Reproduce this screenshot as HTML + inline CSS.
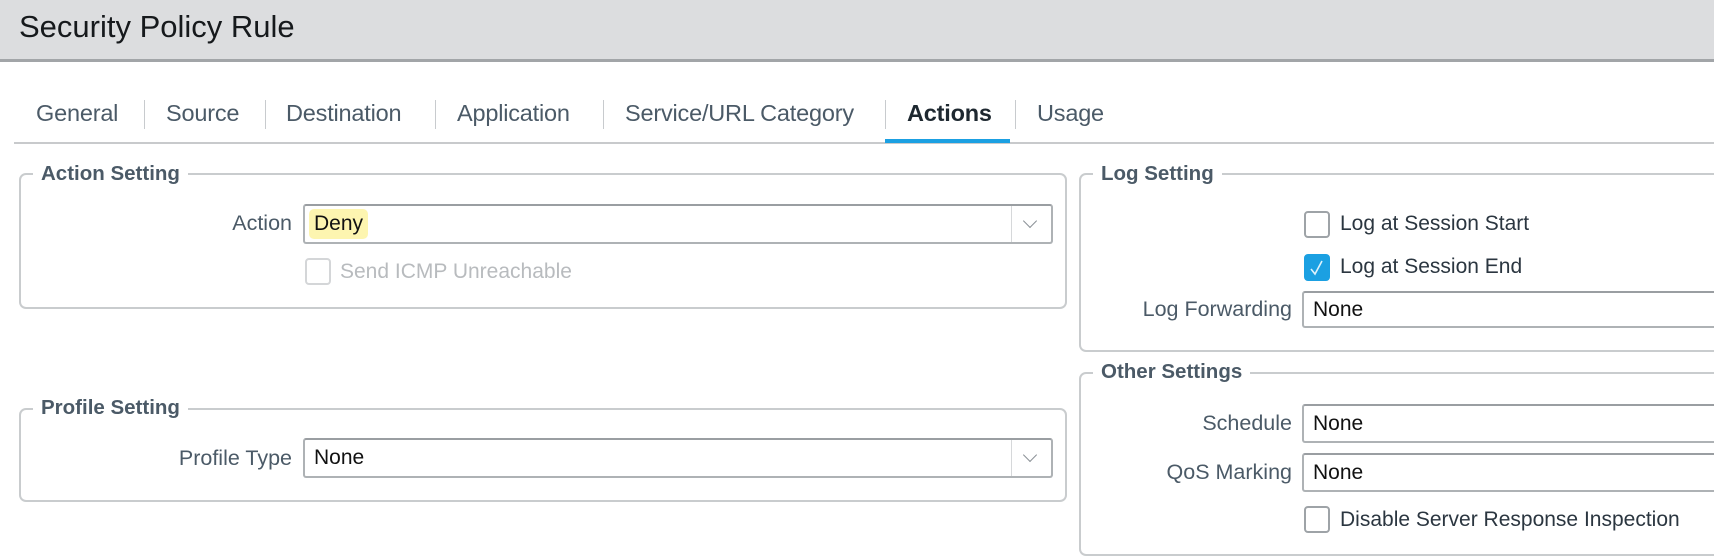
<!DOCTYPE html>
<html><head><meta charset="utf-8"><style>
*{box-sizing:border-box;margin:0;padding:0}
body{width:1714px;height:558px;overflow:hidden;background:#fff;font-family:"Liberation Sans",sans-serif;position:relative;color:#4b5a67}
.a{position:absolute;white-space:nowrap}
.hdr{left:0;top:0;width:1714px;height:62px;background:#dcdddf;border-bottom:3px solid #a2a5a8}
.title{left:19px;top:9px;font-size:31px;color:#16191c}
.tab{top:100px;font-size:23.5px;color:#4b5a67;letter-spacing:-0.2px}
.sep{top:100px;width:1px;height:29px;background:#c8cbce}
.box{border:2px solid #c9ccce;border-radius:7px}
.leg{font-size:20.5px;font-weight:bold;color:#4b5a67;background:#fff;padding:0 8px;top:162px}
.lbl{font-size:21.5px;color:#4b5a67;text-align:right}
.inp{border:2px solid #aeb2b5;border-top-color:#9a9ea2;border-radius:3px;background:#fff;font-size:21px;color:#111;padding-left:9px;display:flex;align-items:center}
.dd{position:absolute;right:0;top:0;bottom:0;width:40px;border-left:1px solid #d6d8da}
.dd:after{content:"";position:absolute;left:13px;top:10px;width:9px;height:9px;border-right:1.5px solid #8a9096;border-bottom:1.5px solid #8a9096;transform:rotate(45deg)}
.cb{width:26px;height:27px;border:2px solid #9ea3a7;border-radius:4px;background:#fff}
.ct{font-size:21px;color:#2b3640}
</style></head><body>
<div class="a hdr"></div>
<div class="a title">Security Policy Rule</div>

<div class="a tab" style="left:36px">General</div>
<div class="a sep" style="left:144px"></div>
<div class="a tab" style="left:166px">Source</div>
<div class="a sep" style="left:265px"></div>
<div class="a tab" style="left:286px">Destination</div>
<div class="a sep" style="left:435px"></div>
<div class="a tab" style="left:457px">Application</div>
<div class="a sep" style="left:603px"></div>
<div class="a tab" style="left:625px">Service/URL Category</div>
<div class="a sep" style="left:885px"></div>
<div class="a tab" style="left:907px;font-weight:bold;color:#1e2830">Actions</div>
<div class="a sep" style="left:1015px"></div>
<div class="a tab" style="left:1037px">Usage</div>
<div class="a" style="left:14px;top:142px;width:1700px;height:2px;background:#c8cacc"></div>
<div class="a" style="left:885px;top:139px;width:125px;height:4px;background:#1ba0e2"></div>

<!-- Action Setting -->
<div class="a box" style="left:19px;top:173px;width:1048px;height:136px"></div>
<div class="a leg" style="left:33px;top:162px">Action Setting</div>
<div class="a lbl" style="left:150px;width:142px;top:211px">Action</div>
<div class="a inp" style="left:303px;top:204px;width:750px;height:40px;padding-left:4px"><span style="background:#fdf5b0;border-radius:5px;padding:3px 5px">Deny</span><div class="dd"></div></div>
<div class="a cb" style="left:305px;top:258px;border-color:#d4d6d8"></div>
<div class="a ct" style="left:340px;top:260px;color:#b8bbbe">Send ICMP Unreachable</div>

<!-- Profile Setting -->
<div class="a box" style="left:19px;top:408px;width:1048px;height:94px"></div>
<div class="a leg" style="left:33px;top:396px">Profile Setting</div>
<div class="a lbl" style="left:100px;width:192px;top:446px">Profile Type</div>
<div class="a inp" style="left:303px;top:438px;width:750px;height:40px">None<div class="dd"></div></div>

<!-- Log Setting -->
<div class="a box" style="left:1079px;top:173px;width:660px;height:179px"></div>
<div class="a leg" style="left:1093px;top:162px">Log Setting</div>
<div class="a cb" style="left:1304px;top:211px"></div>
<div class="a ct" style="left:1340px;top:212px">Log at Session Start</div>
<div class="a cb" style="left:1304px;top:254px;background:#1ba0e2;border-color:#1ba0e2">
<svg width="22" height="23" viewBox="0 0 22 23" style="position:absolute;left:0;top:0"><path d="M5 13 L9 18 L16 5" stroke="#dff2fb" stroke-width="1.6" fill="none"/></svg></div>
<div class="a ct" style="left:1340px;top:255px">Log at Session End</div>
<div class="a lbl" style="left:1080px;width:212px;top:297px">Log Forwarding</div>
<div class="a inp" style="left:1302px;top:291px;width:450px;height:37px">None</div>

<!-- Other Settings -->
<div class="a box" style="left:1079px;top:372px;width:660px;height:184px"></div>
<div class="a leg" style="left:1093px;top:360px">Other Settings</div>
<div class="a lbl" style="left:1080px;width:212px;top:411px">Schedule</div>
<div class="a inp" style="left:1302px;top:404px;width:450px;height:39px">None</div>
<div class="a lbl" style="left:1080px;width:212px;top:460px">QoS Marking</div>
<div class="a inp" style="left:1302px;top:453px;width:450px;height:39px">None</div>
<div class="a cb" style="left:1304px;top:506px"></div>
<div class="a ct" style="left:1340px;top:508px">Disable Server Response Inspection</div>
</body></html>
